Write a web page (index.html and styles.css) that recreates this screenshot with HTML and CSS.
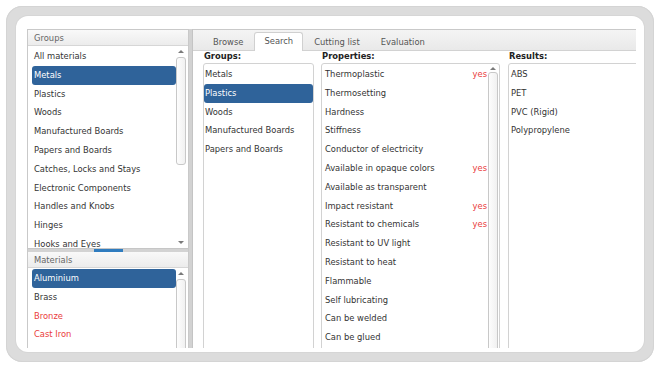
FILE: index.html
```html
<!DOCTYPE html>
<html>
<head>
<meta charset="utf-8">
<link rel="stylesheet" href="styles.css">
</head>
<body>
<div class="frame">
  <div class="inner">
    <div class="app">
      <div class="left">
        <div class="phead">Groups</div>
        <div class="plist groups">
          <ul class="items">
            <li>All materials</li>
            <li class="sel">Metals</li>
            <li>Plastics</li>
            <li>Woods</li>
            <li>Manufactured Boards</li>
            <li>Papers and Boards</li>
            <li>Catches, Locks and Stays</li>
            <li>Electronic Components</li>
            <li>Handles and Knobs</li>
            <li>Hinges</li>
            <li>Hooks and Eyes</li>
          </ul>
          <div class="sbar">
            <span class="arr up"></span>
            <span class="thumb thumb-groups"></span>
            <span class="spacer"></span>
            <span class="arr down"></span>
          </div>
        </div>
        <div class="hsplit"><span class="grip"></span></div>
        <div class="phead">Materials</div>
        <div class="plist mats">
          <ul class="items">
            <li class="sel">Aluminium</li>
            <li>Brass</li>
            <li class="red">Bronze</li>
            <li class="red">Cast Iron</li>
          </ul>
          <div class="sbar">
            <span class="arr up"></span>
            <span class="thumb thumb-long"></span>
          </div>
        </div>
      </div>
      <div class="vsplit"></div>
      <div class="right">
        <div class="tabs">
          <span class="tab">Browse</span>
          <span class="tab active">Search</span>
          <span class="tab">Cutting list</span>
          <span class="tab">Evaluation</span>
        </div>
        <div class="cols">
          <div class="col col-groups">
            <div class="lbl">Groups:</div>
            <div class="box">
              <ul class="items">
                <li>Metals</li>
                <li class="sel">Plastics</li>
                <li>Woods</li>
                <li>Manufactured Boards</li>
                <li>Papers and Boards</li>
              </ul>
            </div>
          </div>
          <div class="col col-props">
            <div class="lbl">Properties:</div>
            <div class="box">
              <ul class="items props">
                <li><span>Thermoplastic</span><b class="yes">yes</b></li>
                <li><span>Thermosetting</span></li>
                <li><span>Hardness</span></li>
                <li><span>Stiffness</span></li>
                <li><span>Conductor of electricity</span></li>
                <li><span>Available in opaque colors</span><b class="yes">yes</b></li>
                <li><span>Available as transparent</span></li>
                <li><span>Impact resistant</span><b class="yes">yes</b></li>
                <li><span>Resistant to chemicals</span><b class="yes">yes</b></li>
                <li><span>Resistant to UV light</span></li>
                <li><span>Resistant to heat</span></li>
                <li><span>Flammable</span></li>
                <li><span>Self lubricating</span></li>
                <li><span>Can be welded</span></li>
                <li><span>Can be glued</span></li>
              </ul>
              <div class="sbar">
                <span class="arr up"></span>
                <span class="thumb thumb-long"></span>
              </div>
            </div>
          </div>
          <div class="col col-results">
            <div class="lbl">Results:</div>
            <div class="box">
              <ul class="items">
                <li>ABS</li>
                <li>PET</li>
                <li>PVC (Rigid)</li>
                <li>Polypropylene</li>
              </ul>
            </div>
          </div>
        </div>
      </div>
    </div>
  </div>
</div>
</body>
</html>
```
FILE: styles.css
```css
* { box-sizing: border-box; margin: 0; padding: 0; }
body {
  margin: 0;
  background: #fff;
  font-family: "DejaVu Sans Condensed", "DejaVu Sans", sans-serif;
  font-stretch: condensed;
  font-size: 9.3px;
  color: #333;
}
ul { list-style: none; }

.frame {
  margin: 6px;
  width: 648px;
  height: 356px;
  background: #dcdcdc;
  border-radius: 16px;
  padding: 10px;
  box-shadow: inset 0 0 0 1px #d4d4d4;
}
.inner {
  background: #fff;
  border-radius: 12px;
  height: 100%;
  padding: 13px 8px 4px 11px;
  box-shadow: 0 0 0 1px #d6d6d6;
}
.app {
  display: flex;
  height: 100%;
  overflow: hidden;
}

/* left panel */
.left {
  width: 162px;
  flex: none;
  border: 1px solid #c9c9c9;
  border-bottom: 0;
  display: flex;
  flex-direction: column;
}
.phead {
  height: 16px;
  flex: none;
  line-height: 15px;
  padding-left: 6px;
  color: #666;
  background: linear-gradient(#f9f9f9, #ececec);
  border-bottom: 1px solid #d6d6d6;
}
.plist {
  display: flex;
  flex: none;
}
.plist.groups { height: 202px; padding-top: 1px; }
.plist.mats { flex: 1; padding-top: 1px; }
.plist .items {
  margin-left: 4px;
  width: 144px;
  flex: none;
}
.items li {
  height: 18.8px;
  line-height: 18.8px;
  padding-left: 2px;
  white-space: nowrap;
  border-radius: 3px;
}
.items li.sel {
  background: #2f639a;
  color: #fff;
}
.items li.red { color: #ea3b3b; }

.sbar {
  width: 10px;
  flex: none;
  margin-right: 2px;
  display: flex;
  flex-direction: column;
  align-items: center;
  padding: 3px 0 4px;
}
.arr {
  width: 0;
  height: 0;
  border-left: 3px solid transparent;
  border-right: 3px solid transparent;
  flex: none;
}
.arr.up { border-bottom: 3px solid #7a7a7a; }
.arr.down { border-top: 3px solid #7a7a7a; }
.thumb {
  width: 10px;
  flex: none;
  margin-top: 4px;
  border: 1px solid #c8c8c8;
  border-radius: 3px;
  background: linear-gradient(90deg, #fdfdfd, #f1f1f1);
}
.thumb-groups { height: 108px; }
.thumb-long { height: 400px; }
.spacer { flex: 1; }

.hsplit {
  height: 4px;
  flex: none;
  background: #d3d3d3;
  border-top: 1px solid #c6c6c6;
  display: flex;
  justify-content: center;
}
.grip {
  width: 29px;
  height: 3px;
  background: #2f7cbf;
}

.vsplit {
  width: 4px;
  flex: none;
  background: #d2d2d2;
  border-right: 1px solid #c4c4c4;
}

/* right panel */
.right {
  flex: 1;
  min-width: 0;
  border-top: 1px solid #c9c9c9;
  display: flex;
  flex-direction: column;
}
.tabs {
  height: 21px;
  flex: none;
  display: flex;
  align-items: flex-end;
  padding-left: 10px;
  background: linear-gradient(#f4f4f4, #e9e9e9);
  border-bottom: 1px solid #d2d2d2;
}
.tab {
  height: 18px;
  line-height: 15px;
  padding: 0 9px;
  margin-right: 1px;
  color: #555;
  white-space: nowrap;
  border: 1px solid transparent;
  border-bottom: 0;
  border-radius: 3px 3px 0 0;
  margin-bottom: -1px;
}
.tab.active {
  background: #fff;
  border-color: #d0d0d0;
  height: 19px;
  color: #555;
}

.cols {
  display: flex;
  padding-left: 10px;
  gap: 7px;
  flex: 1;
}
.col { flex: none; display: flex; flex-direction: column; }
.col-groups { width: 111px; }
.col-props { width: 179px; }
.col-results { width: 150px; margin-left: 1px; }
.lbl {
  height: 11px;
  line-height: 10px;
  margin-bottom: 1px;
  font-weight: bold;
  color: #222;
  padding-left: 1px;
}
.box {
  height: 320px;
  border: 1px solid #d2d2d2;
  border-radius: 3px;
  display: flex;
  padding-top: 1px;
}
.col-groups .items { width: 100%; }
.col-groups .items li { padding-left: 1px; }
.col-props .items {
  width: 166px;
  flex: none;
  padding-left: 3px;
}
.props li {
  display: flex;
  justify-content: space-between;
  padding-left: 0;
  padding-right: 1px;
}
.yes { color: #ea3b3b; font-weight: normal; }
.col-props .sbar { margin-right: 1px; padding-top: 2px; }
.col-props .sbar .thumb { margin-top: 2px; }
.col-results .items { width: 100%; }
.col-results .items li { padding-left: 2px; }
```
